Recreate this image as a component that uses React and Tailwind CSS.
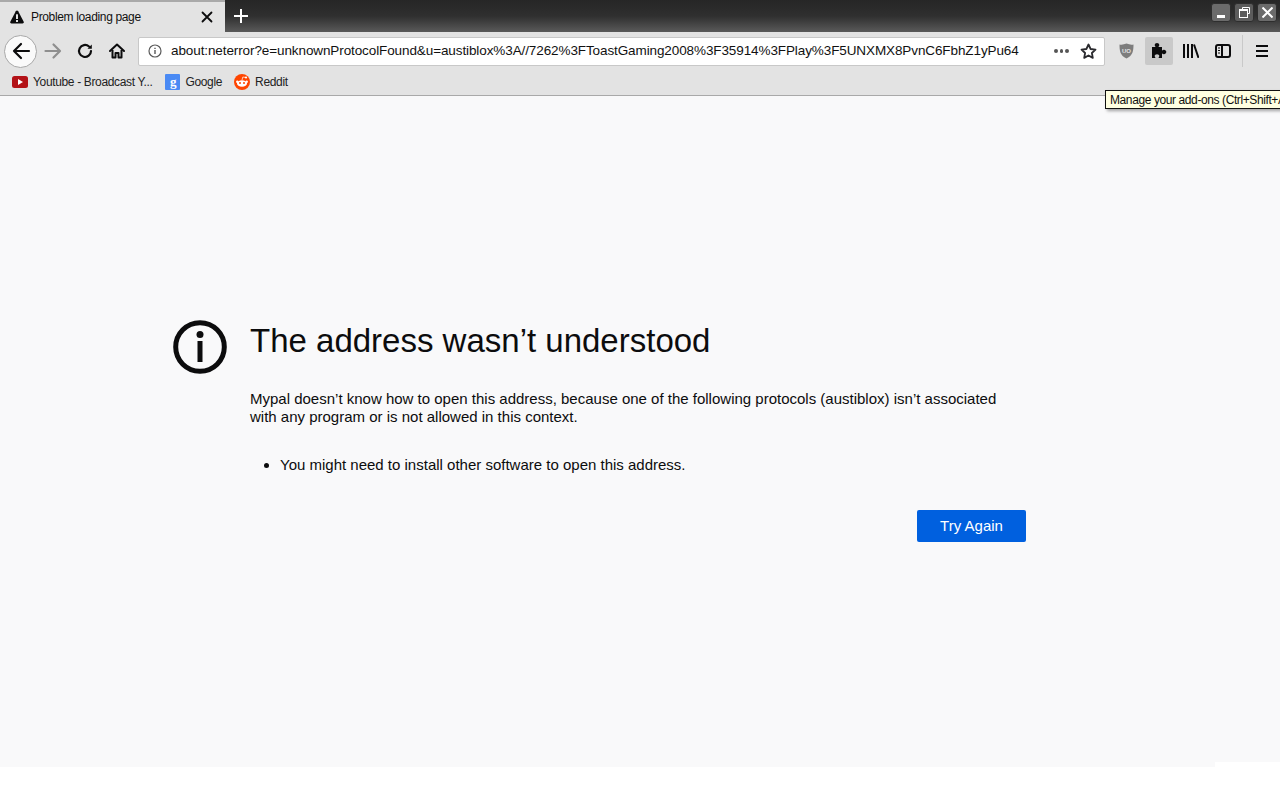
import React from "react";

const ui = "font-['Liberation_Sans',Arial,sans-serif]";

function Back() {
  return (
    <svg width="20" height="20" viewBox="0 0 20 20" fill="none" stroke="#0c0c0d" strokeWidth="2.2" strokeLinecap="round" strokeLinejoin="round">
      <path d="M18 10H3M10 3l-7 7 7 7" />
    </svg>
  );
}

function Forward() {
  return (
    <svg width="18" height="18" viewBox="0 0 18 18" fill="none" stroke="#8f8f8f" strokeWidth="2.2" strokeLinecap="round" strokeLinejoin="round">
      <path d="M1.5 9h14M9.5 2.5 16 9l-6.500 6.500" />
    </svg>
  );
}

function Reload() {
  return (
    <svg width="16" height="16" viewBox="0 0 16 16" fill="none" stroke="#0c0c0d" strokeWidth="2.200" strokeLinecap="round">
      <path d="M14 8a6 6 0 1 1-2-4.500" />
      <path d="M14.800 1.500v4.300h-4.300" fill="#0c0c0d" stroke="none" />
    </svg>
  );
}

function Home() {
  return (
    <svg width="16" height="16" viewBox="0 0 16 16" fill="none" stroke="#0c0c0d" strokeWidth="2" strokeLinejoin="round">
      <path d="M1 8 8 1.500 15 8" strokeLinecap="round" />
      <path d="M3.500 7v7.500h3V10h3v4.500h3V7" />
    </svg>
  );
}

function Star() {
  return (
    <svg width="17" height="17" viewBox="0 0 17 17" fill="none" stroke="#2a2a2e" strokeWidth="1.800" strokeLinejoin="round">
      <path d="M8.500 1.500 10.600 6l4.900.6-3.600 3.400.9 4.900-4.300-2.400-4.300 2.400.9-4.900L1.500 6.600 6.400 6z" />
    </svg>
  );
}

function Shield() {
  return (
    <svg width="15" height="16" viewBox="0 0 15 16">
      <path d="M.5 1.500C3 2 5 1.500 7.500.5c2.500 1 4.500 1.500 7 1 0 6-.5 11-7 14-6.500-3-7-8-7-14z" fill="#7d7d7d" />
      <text x="7.500" y="9.500" textAnchor="middle" fontSize="6" fontWeight="700" fill="#e3e3e3" fontFamily="Liberation Sans">UO</text>
    </svg>
  );
}

function Puzzle() {
  return (
    <svg width="16" height="16" viewBox="0 0 16 16" fill="#0c0c0d">
      <path d="M1 4h3.500C4 3 3.700 2.600 3.700 2 3.700.8 4.800 0 6 0s2.300.8 2.300 2c0 .6-.3 1-.8 2H11v3.500c1-.5 1.400-.8 2-.8 1.200 0 2.300 1 2.300 2.200s-1.100 2.300-2.300 2.300c-.6 0-1-.3-2-.8V15H7.500c.5-1 .8-1.400.8-2 0-1.100-1-1.800-2.300-1.800S3.700 11.900 3.700 13c0 .6.300 1 .8 2H1z" />
    </svg>
  );
}

function Library() {
  return (
    <svg width="16" height="14" viewBox="0 0 16 14" stroke="#0c0c0d" strokeWidth="2" fill="none">
      <path d="M1 0v14M5 0v14M9 0v14M11 .5l4.500 13.300" />
    </svg>
  );
}

function Sidebar() {
  return (
    <svg width="16" height="14" viewBox="0 0 16 14" fill="none" stroke="#0c0c0d">
      <rect x="1" y="1" width="14" height="12" rx="2" strokeWidth="2" />
      <path d="M7 1v12" strokeWidth="2" />
      <path d="M3 4h2M3 6.500h2M3 9h2" strokeWidth="1" />
    </svg>
  );
}

function BigInfo() {
  return (
    <svg width="54" height="54" viewBox="0 0 54 54" fill="#0c0c0d" className="shrink-0">
      <circle cx="27" cy="27" r="24.300" fill="none" stroke="#0c0c0d" strokeWidth="5" />
      <circle cx="27" cy="14.500" r="3.500" />
      <rect x="24.500" y="21" width="5" height="21" />
    </svg>
  );
}

function Bookmark({ icon, label, className }) {
  return (
    <div className={`flex items-center gap-[5px] text-[12px] tracking-[-0.35px] text-[#222] ${className}`}>
      {icon}
      <span>{label}</span>
    </div>
  );
}

export default function App() {
  return (
    <div className={`relative h-[800px] w-[1280px] overflow-hidden bg-white ${ui}`}>
      {/* Tab strip */}
      <div className="flex h-[32px] bg-gradient-to-b from-[#262626] via-[#2f2f2f] to-[#5a5a5a]">
        <div className="flex w-[225px] items-center border-t-[2px] border-[#a9a9a9] bg-[#e3e3e3] pl-[10px] pr-[12px]">
          <svg width="14" height="14" viewBox="0 0 14 14" fill="#0c0c0d" className="shrink-0">
            <path d="M7 .5c.5 0 .9.300 1.200.8l5.500 10.500c.4.900-.2 1.700-1.100 1.700H1.400c-.9 0-1.500-.8-1.100-1.700L5.800 1.300C6.100.8 6.500.5 7 .5z" />
            <rect x="6" y="4.300" width="2" height="4.700" fill="#e3e3e3" />
            <rect x="6" y="10" width="2" height="2" fill="#e3e3e3" />
          </svg>
          <span className="ml-[7px] flex-1 text-[12px] tracking-[-0.35px] text-[#111]">Problem loading page</span>
          <svg width="12" height="12" viewBox="0 0 12 12" stroke="#0c0c0d" strokeWidth="1.800" strokeLinecap="round">
            <path d="M1.500 1.500l9 9M10.500 1.500l-9 9" />
          </svg>
        </div>
        <div className="flex w-[32px] items-center justify-center">
          <svg width="14" height="14" viewBox="0 0 14 14" stroke="#fff" strokeWidth="2">
            <path d="M7 0v14M0 7h14" />
          </svg>
        </div>
        <div className="flex-1" />
        <div className="flex items-start gap-[3px] pr-[3px] pt-[3px]">
          <div className="flex h-[19px] w-[20px] items-end justify-center rounded-[3px] border border-[#2e2e2e] bg-[#6b6b6b] pb-[3px]">
            <div className="h-[3px] w-[8px] bg-white" />
          </div>
          <div className="flex h-[19px] w-[20px] items-center justify-center rounded-[3px] border border-[#2e2e2e] bg-[#5c5c5c]">
            <svg width="11" height="11" viewBox="0 0 11 11" fill="none" stroke="#fff">
              <path d="M3.500 2.500v-2h7v6h-2" />
              <rect x=".5" y="2.500" width="8" height="8" strokeWidth="1" />
              <path d="M.5 3.500h8" />
            </svg>
          </div>
          <div className="flex h-[19px] w-[20px] items-center justify-center rounded-[3px] border border-[#2e2e2e] bg-[#6b6b6b]">
            <svg width="11" height="11" viewBox="0 0 11 11" stroke="#fff" strokeWidth="2">
              <path d="M.5.5l10 10M10.500.5l-10 10" />
            </svg>
          </div>
        </div>
      </div>

      {/* Navigation toolbar */}
      <div className="flex h-[38px] items-center bg-[#e3e3e3] pl-[4px]">
        <div className="flex h-[33px] w-[33px] items-center justify-center rounded-full border border-[#a8a8a8] bg-[#fafafa]">
          <Back />
        </div>
        <div className="ml-[7px] flex w-[18px] justify-center">
          <Forward />
        </div>
        <div className="ml-[15px] flex w-[16px] justify-center">
          <Reload />
        </div>
        <div className="ml-[16px] flex w-[16px] justify-center">
          <Home />
        </div>
        <div className="ml-[13px] flex h-[29px] w-[967px] items-center rounded-[2px] border border-[#c8c8c8] bg-white pl-[9px] pr-[6px]">
          <svg width="14" height="14" viewBox="0 0 14 14" fill="none" className="shrink-0">
            <circle cx="7" cy="7" r="6" stroke="#5a5a5a" strokeWidth="1.200" />
            <path d="M7 6v4M7 3.700v1.200" stroke="#5a5a5a" strokeWidth="1.400" />
          </svg>
          <div className="ml-[9px] w-[848px] overflow-hidden whitespace-nowrap text-[13.500px] tracking-[-0.1px] text-[#111]">
            about:neterror?e=unknownProtocolFound&amp;u=austiblox%3A//7262%3FToastGaming2008%3F35914%3FPlay%3F5UNXMX8PvnC6FbhZ1yPu64E
          </div>
          <div className="ml-[35px] flex gap-[2px]">
            <span className="h-[3.500px] w-[3.500px] rounded-full bg-[#555]" />
            <span className="h-[3.500px] w-[3.500px] rounded-full bg-[#555]" />
            <span className="h-[3.500px] w-[3.500px] rounded-full bg-[#555]" />
          </div>
          <div className="ml-[11px] flex">
            <Star />
          </div>
        </div>
        <div className="ml-[14px] flex w-[15px] justify-center">
          <Shield />
        </div>
        <div className="ml-[11px] flex h-[28px] w-[28px] items-center justify-center rounded-[2px] bg-[#c9c9c9]">
          <Puzzle />
        </div>
        <div className="ml-[10px] flex w-[16px] justify-center">
          <Library />
        </div>
        <div className="ml-[16px] flex w-[16px] justify-center">
          <Sidebar />
        </div>
        <div className="ml-[11px] h-[32px] w-px bg-[#c9c9c9]" />
        <div className="ml-[13px] flex w-[12px] flex-col gap-[3px]">
          <span className="h-[2px] bg-[#0c0c0d]" />
          <span className="h-[2px] bg-[#0c0c0d]" />
          <span className="h-[2px] bg-[#0c0c0d]" />
        </div>
      </div>

      {/* Bookmarks */}
      <div className="flex h-[26px] items-center border-b border-[#a9a9a9] bg-[#e3e3e3] pb-[2px] pl-[12px]">
        <Bookmark
          label="Youtube - Broadcast Y..."
          icon={
            <svg width="16" height="12" viewBox="0 0 16 12">
              <rect width="16" height="12" rx="2.500" fill="#b31217" />
              <path d="M6 3l5 3-5 3z" fill="#fff" />
            </svg>
          }
        />
        <Bookmark
          className="ml-[13px]"
          label="Google"
          icon={
            <div className="flex h-[16px] w-[15px] items-center justify-center rounded-[1px] bg-[#4a8af4] font-['Liberation_Serif',serif] text-[13px] font-bold leading-none text-white">
              g
            </div>
          }
        />
        <Bookmark
          className="ml-[12px]"
          label="Reddit"
          icon={
            <svg width="16" height="16" viewBox="0 0 16 16">
              <circle cx="8" cy="8" r="8" fill="#ff4500" />
              <ellipse cx="8" cy="9.500" rx="5" ry="3.300" fill="#fff" />
              <circle cx="3.300" cy="7.800" r="1.200" fill="#fff" />
              <circle cx="12.700" cy="7.800" r="1.200" fill="#fff" />
              <circle cx="12" cy="3.500" r="1.100" fill="#fff" />
              <path d="M8 6l.8-3L12 3.500" fill="none" stroke="#fff" strokeWidth=".7" />
              <circle cx="6" cy="9" r="1" fill="#ff4500" />
              <circle cx="10" cy="9" r="1" fill="#ff4500" />
            </svg>
          }
        />
      </div>

      {/* Page */}
      <div className="h-[671px] bg-[#f9f9fa] pl-[173px] pt-[224px] text-[#0c0c0d]">
        <div className="flex w-[853px] gap-[23px]">
          <BigInfo />
          <div className="flex-1">
            <h1 className="mt-[1px] text-[33px] font-normal leading-[40px]">The address wasn’t understood</h1>
            <p className="mt-[29px] text-[15px] leading-[18px]">
              Mypal doesn’t know how to open this address, because one of the following protocols (austiblox) isn’t associated with any program or is not allowed in this context.
            </p>
            <ul className="mt-[30px] list-disc pl-[30px] text-[15px] leading-[18px]">
              <li>You might need to install other software to open this address.</li>
            </ul>
            <div className="mt-[36px] flex justify-end">
              <button className="h-[32px] w-[109px] rounded-[2px] bg-[#0060df] text-[15px] font-normal text-white">Try Again</button>
            </div>
          </div>
        </div>
      </div>

      {/* Unpainted corner */}
      <div className="absolute left-[1215px] top-[762px] h-[5px] w-[65px] bg-white" />

      {/* Tooltip */}
      <div className="absolute left-[1105px] top-[90px] flex h-[19px] items-center whitespace-nowrap border border-[#111] bg-[#ffffe1] px-[4px] text-[12px] tracking-[-0.4px] text-[#111] shadow-[2px_2px_3px_rgba(0,0,0,0.35)]">
        Manage your add-ons (Ctrl+Shift+A)
      </div>
    </div>
  );
}
